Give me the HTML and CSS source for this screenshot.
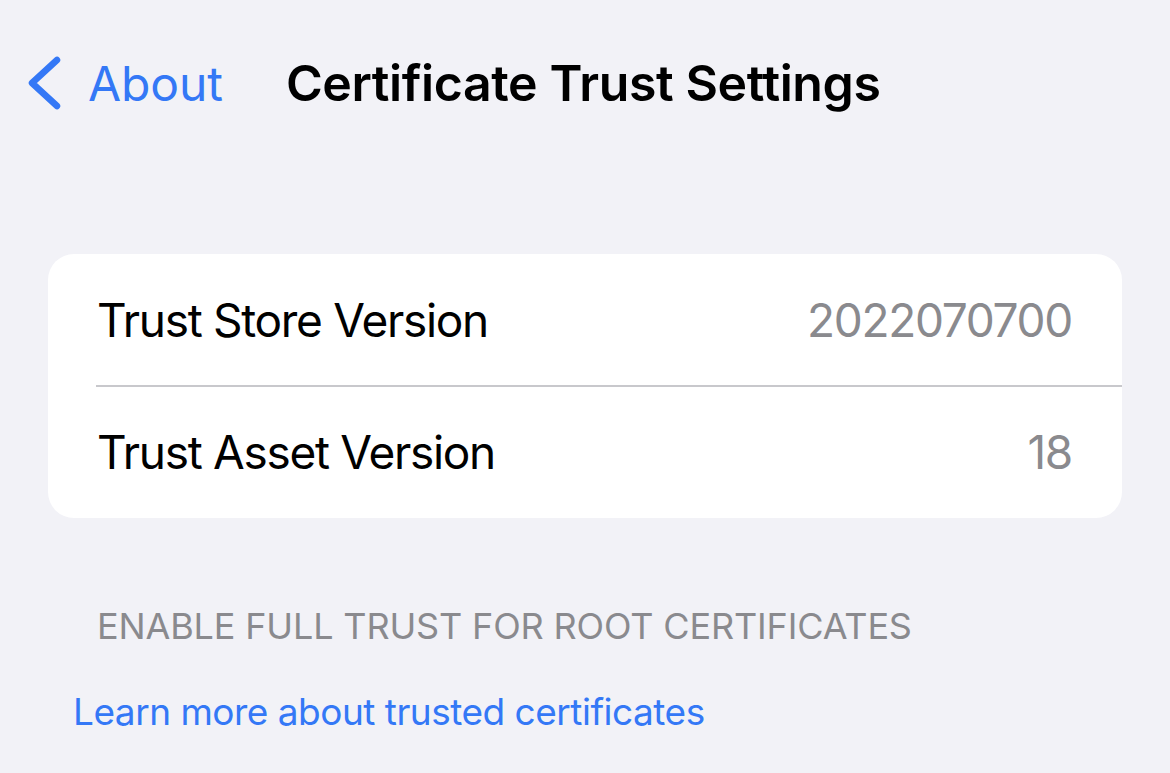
FILE: index.html
```html
<!DOCTYPE html>
<html>
<head>
<meta charset="utf-8">
<link rel="stylesheet" href="styles.css">
</head>
<body>
<div class="screen">
  <header class="nav">
    <a class="back">
      <svg class="chev" width="36" height="54" viewBox="0 0 36 54"><path d="M31 4 L6 27 L31 50" fill="none" stroke="#3478f6" stroke-width="6.5" stroke-linecap="round" stroke-linejoin="round"/></svg>
      <span class="back-label">About</span>
    </a>
    <h1 class="title">Certificate Trust Settings</h1>
  </header>
  <section class="card">
    <div class="row">
      <span class="label">Trust Store Version</span>
      <span class="value">2022070700</span>
    </div>
    <div class="sep"></div>
    <div class="row">
      <span class="label">Trust Asset Version</span>
      <span class="value">18</span>
    </div>
  </section>
  <div class="section-header">ENABLE FULL TRUST FOR ROOT CERTIFICATES</div>
  <a class="link">Learn more about trusted certificates</a>
</div>
</body>
</html>
```
FILE: styles.css
```css
html, body {
  margin: 0;
  padding: 0;
  background: #f2f2f7;
}
.screen {
  width: 1170px;
  height: 773px;
  overflow: hidden;
  font-family: Inter, "Liberation Sans", sans-serif;
  color: #000;
}
.nav {
  height: 166px;
  display: flex;
  align-items: center;
  padding-left: 26px;
}
.back {
  display: flex;
  align-items: center;
  color: #3478f6;
}
.chev {
  display: block;
  margin-right: 26px;
}
.back-label {
  font-size: 48px;
  letter-spacing: -0.1px;
}
.title {
  margin: 0 0 0 63px;
  font-size: 50px;
  font-weight: 600;
  letter-spacing: -0.4px;
}
.card {
  margin: 88px 48px 0 48px;
  background: #fff;
  border-radius: 26px;
  overflow: hidden;
}
.row {
  height: 131px;
  display: flex;
  align-items: center;
  justify-content: space-between;
  padding: 0 50px 0 49px;
  font-size: 46px;
  letter-spacing: -1.3px;
}
.value {
  color: #8a8a8e;
}
.sep {
  height: 1.5px;
  background: #c8c8cc;
  margin-left: 48px;
}
.section-header {
  margin: 86px 0 0 97px;
  font-size: 36px;
  color: #8a8a8e;
  letter-spacing: -0.15px;
  line-height: 44px;
}
.link {
  display: block;
  margin: 42px 0 0 73px;
  font-size: 37px;
  color: #3478f6;
  letter-spacing: -0.5px;
  line-height: 44px;
}
```
